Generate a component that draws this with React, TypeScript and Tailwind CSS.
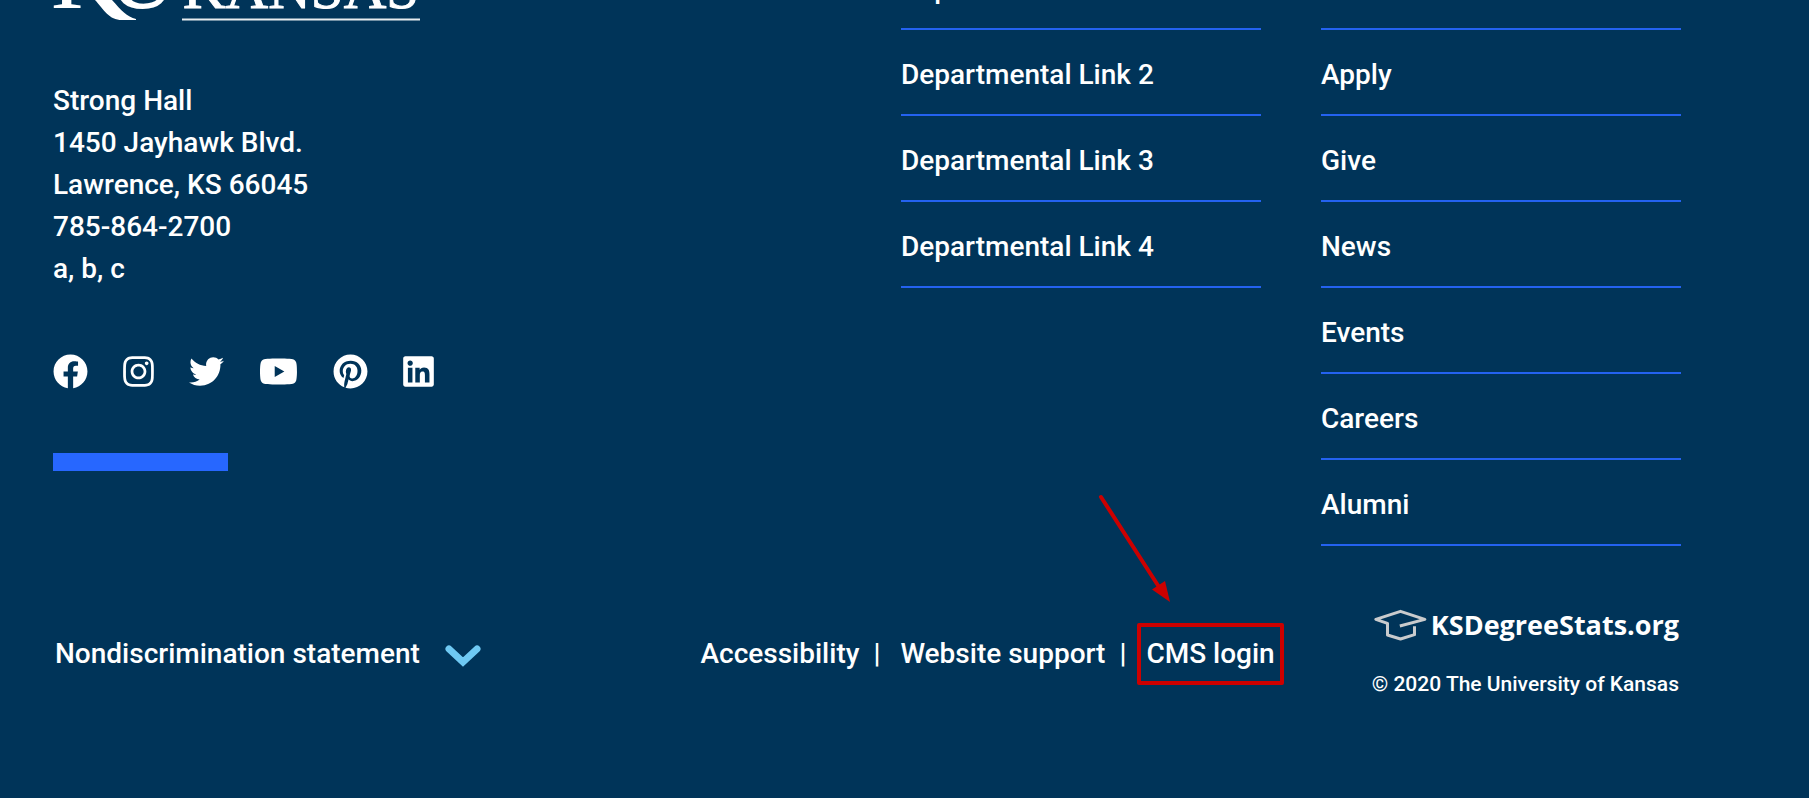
import React from 'react';
import {
  FaFacebook,
  FaInstagram,
  FaLinkedin,
  FaPinterest,
  FaTwitter,
  FaYoutube
} from 'react-icons/fa';

const departmentLinks = [
  'Departmental Link 1',
  'Departmental Link 2',
  'Departmental Link 3',
  'Departmental Link 4'
];

const universityLinks = ['Visit KU', 'Apply', 'Give', 'News', 'Events', 'Careers', 'Alumni'];

const addressLines = [
  'Strong Hall',
  '1450 Jayhawk Blvd.',
  'Lawrence, KS 66045',
  '785-864-2700',
  'a, b, c'
];

const socialLinks = [
  { label: 'Facebook', Icon: FaFacebook, width: 'w-[35px]' },
  { label: 'Instagram', Icon: FaInstagram, width: 'w-[31px]' },
  { label: 'Twitter', Icon: FaTwitter, width: 'w-[35px]' },
  { label: 'YouTube', Icon: FaYoutube, width: 'w-[39px]' },
  { label: 'Pinterest', Icon: FaPinterest, width: 'w-[35px]' },
  { label: 'LinkedIn', Icon: FaLinkedin, width: 'w-[31px]' }
];

const Logo: React.FC = () => (
  <svg viewBox="0 0 370 24" className="h-6 w-[370px]" fill="#fff">
    <clipPath id="k-stem">
      <rect x="0" y="0" width="38" height="24" />
    </clipPath>
    <text x="-2" y="8" clipPath="url(#k-stem)" className='font-["Liberation_Serif",serif] text-[98px]'>
      K
    </text>
    {/* swash under the monogram */}
    <path d="M42 0C51 10 56 20 69 20H83V19C74 17 68 10 59 0Z" />
    <text x="54" y="8" className='font-["Liberation_Serif",serif] text-[98px]'>
      U
    </text>
    <text x="130" y="8" className='font-["Liberation_Serif",serif] text-[59px]' stroke="#fff">
      KANSAS
    </text>
    <rect x="129" y="18.5" width="238" height="2" fill="#e6ebef" />
  </svg>
);

const LinkColumn: React.FC<{ label: string; links: string[] }> = ({ label, links }) => (
  <nav aria-label={label} className="-mt-14">
    <ul>
      {links.map((link) => (
        <li key={link} className="border-b-2 border-[#2462f0] pt-6 pb-[18px]">
          <a href="#" className="block">
            {link}
          </a>
        </li>
      ))}
    </ul>
  </nav>
);

const Divider: React.FC = () => (
  <span aria-hidden="true" className="ml-3.5 mr-5">
    |
  </span>
);

const App: React.FC = () => {
  return (
    <footer className='min-h-screen overflow-hidden bg-[#003459] pl-[53px] pr-32 font-["Roboto",sans-serif] text-[28px] leading-[42px] font-medium text-white'>
      <div className="grid grid-cols-[minmax(0,1fr)_360px_360px] gap-x-[60px]">
        <div>
          <a href="#" aria-label="The University of Kansas" className="block">
            <Logo />
          </a>
          <address className="mt-14 not-italic">
            {addressLines.map((line) => (
              <div key={line}>{line}</div>
            ))}
          </address>
          <div className="mt-16 flex gap-[35px]">
            {socialLinks.map(({ label, Icon, width }) => (
              <a key={label} href="#" aria-label={label}>
                <Icon className={`h-[35px] ${width}`} />
              </a>
            ))}
          </div>
          <div className="mt-16 h-[18px] w-[175px] bg-[#2767ff]" />
        </div>
        <LinkColumn label="Department" links={departmentLinks} />
        <LinkColumn label="University" links={universityLinks} />
      </div>

      <div className="mt-[61px] flex items-start whitespace-nowrap">
        <button type="button" className="mt-[26px] flex items-center gap-6 pl-0.5">
          Nondiscrimination statement
          <svg viewBox="0 0 38 24" className="mt-1 h-6 w-[38px]" fill="none" stroke="#6fc9f3" strokeWidth="7">
            <path d="M5 5L19 18L33 5" strokeLinecap="round" />
          </svg>
        </button>

        <nav aria-label="Site" className="mt-[26px] mr-[97px] ml-auto flex">
          <a href="#">Accessibility</a>
          <Divider />
          <a href="#">Website support</a>
          <Divider />
          <div className="relative">
            <a href="#">CMS login</a>
            <div className="pointer-events-none absolute -inset-x-[9px] -inset-y-2.5 rounded-xs border-4 border-[#cc0000]" />
            <svg
              viewBox="0 0 74 110"
              className="pointer-events-none absolute bottom-[71px] -left-12 h-[110px] w-[74px]"
              fill="#cc0000"
            >
              <path d="M3 3L61 93" stroke="#cc0000" strokeWidth="4" strokeLinecap="round" />
              <path d="M72 108L54 95.500L67 87Z" />
            </svg>
          </div>
        </nav>

        <div className="pr-0.5">
          <a
            href="#"
            className='flex h-9 items-center justify-end gap-1 font-["Open_Sans",sans-serif] text-[27px] leading-9 font-bold'
          >
            <svg viewBox="74 60 158 96" className="h-8 w-[53px]" fill="none" stroke="#c9cbcd" strokeWidth="9">
              <path d="M151 111L226 91L153 67L79 91L114 103V138L153 150L195 137V112" strokeLinejoin="round" />
            </svg>
            KSDegreeStats.org
          </a>
          <p className="mt-[26px] text-[21px] leading-[30px]">© 2020 The University of Kansas</p>
        </div>
      </div>
    </footer>
  );
};

export default App;
